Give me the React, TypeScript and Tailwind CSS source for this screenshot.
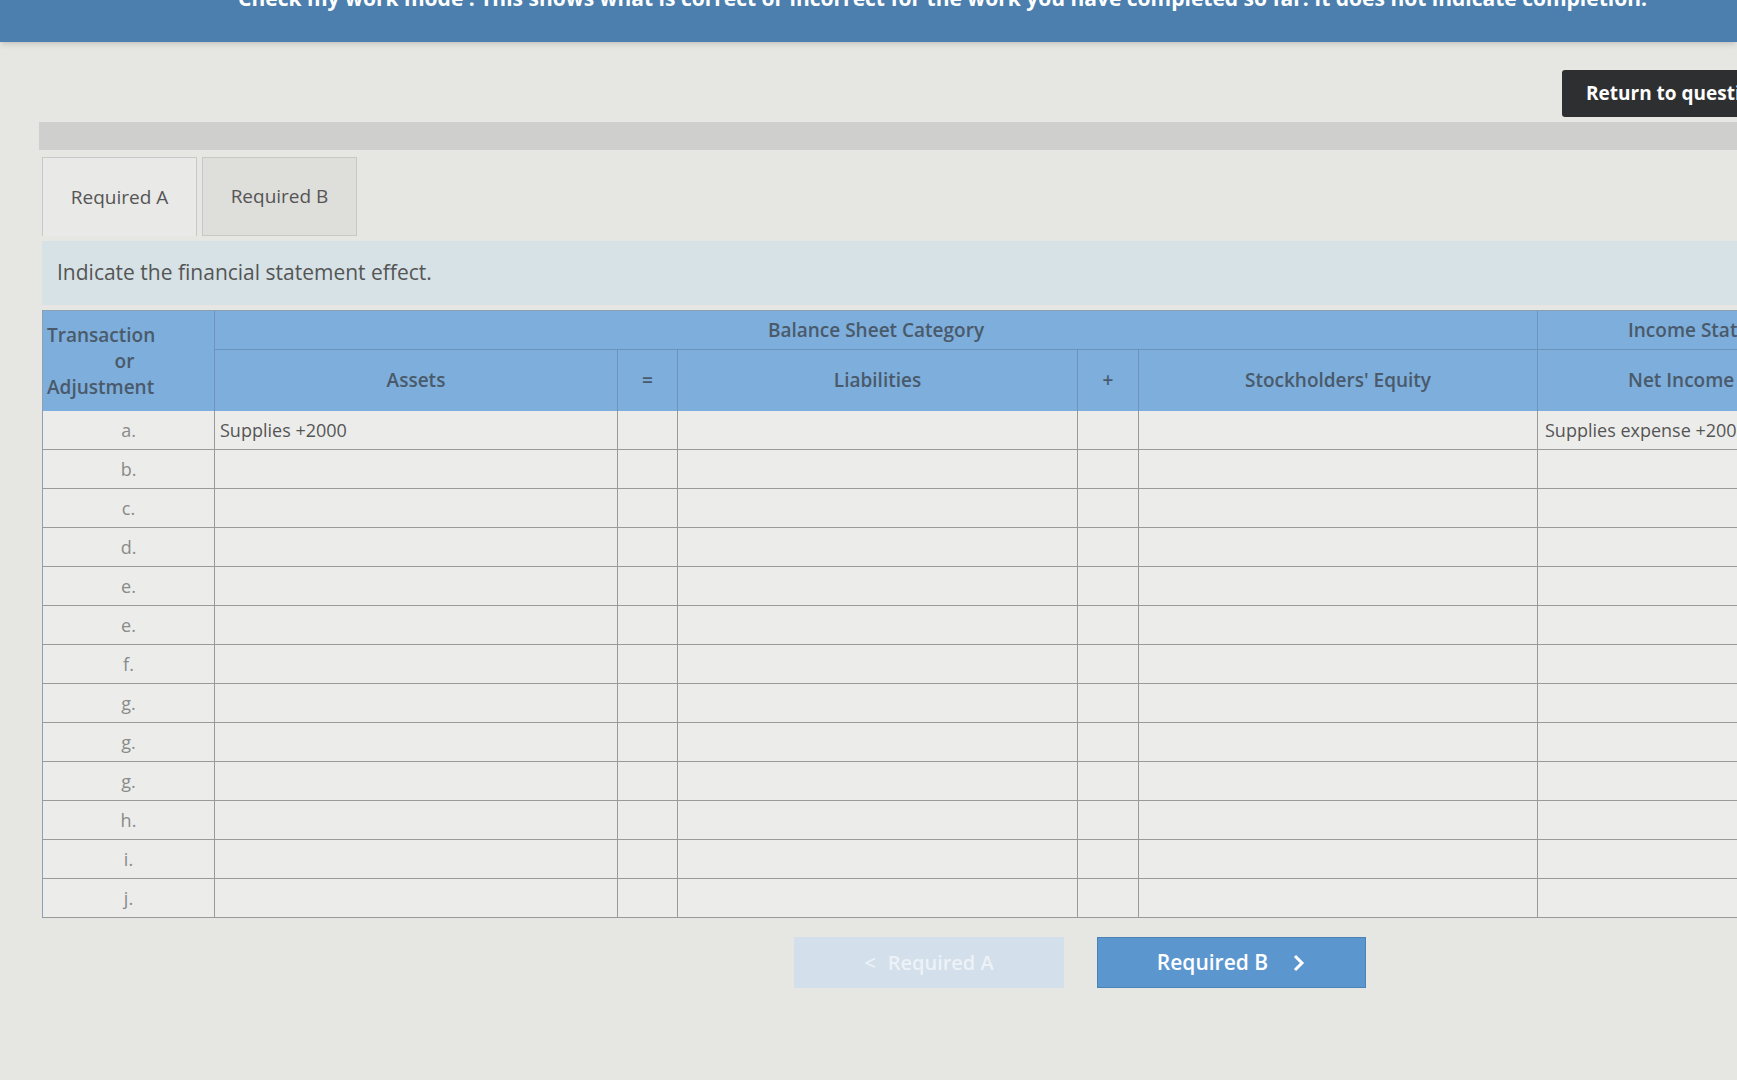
import * as React from 'react';

const rows = ['a.', 'b.', 'c.', 'd.', 'e.', 'e.', 'f.', 'g.', 'g.', 'g.', 'h.', 'i.', 'j.'];

const cell = 'border-r border-b border-[#9a9a9a] h-[39px]';

export default function App() {
  return (
    <div
      className="w-[1737px] h-[1080px] overflow-hidden bg-[#e6e6e3] text-[#555]"
      style={{ fontFamily: '"Open Sans", "Liberation Sans", sans-serif' }}
    >
      <div className="h-[42px] bg-[#4c7fae] overflow-hidden flex items-start justify-end pr-[90px] shadow-md">
        <p className="text-white font-bold text-[21px] leading-none -mt-[12px] whitespace-nowrap">
          Check my work mode : This shows what is correct or incorrect for the work you have completed so far. It does not indicate completion.
        </p>
      </div>

      <div className="flex justify-end pt-[28px] h-[80px]">
        <div className="w-[175px] h-[47px] bg-[#2e2f31] rounded-l-[3px] flex items-center pl-[24px] text-white font-bold text-[19px] whitespace-nowrap overflow-hidden">
          Return to question
        </div>
      </div>

      <div className="ml-[39px] h-[28px] bg-[#cfcfcd]" />

      <div className="ml-[42px] mt-[7px] flex gap-[5px]">
        <div className="w-[155px] h-[79px] border border-[#c8c8c8] border-b-0 bg-[#e9e9e7] flex items-center justify-center text-[19px]">
          Required A
        </div>
        <div className="w-[155px] h-[79px] border border-[#c8c8c8] bg-[#dededb] flex items-center justify-center text-[19px]">
          Required B
        </div>
      </div>

      <div className="ml-[42px] mt-[5px] h-[64px] bg-[#d6e2e6] flex items-center pl-[15px] text-[21px] text-[#555]">
        Indicate the financial statement effect.
      </div>

      <div className="ml-[42px] mt-[5px] w-[1800px] border-l border-t border-[#8aa0b5] text-[19px]">
        <div className="flex bg-[#7daedc] text-[#4a5a6a] font-semibold">
          <div className="w-[172px] h-[100px] border-r border-[#6b93bb] flex flex-col justify-center leading-[26px] px-[4px] items-start">
            <span>Transaction</span>
            <span className="self-center -ml-[8px]">or</span>
            <span>Adjustment</span>
          </div>
          <div className="flex flex-col">
            <div className="h-[39px] w-[1323px] border-r border-b border-[#6b93bb] flex items-center justify-center">
              Balance Sheet Category
            </div>
            <div className="flex h-[61px]">
              <div className="w-[403px] border-r border-[#6b93bb] flex items-center justify-center">Assets</div>
              <div className="w-[60px] border-r border-[#6b93bb] flex items-center justify-center">=</div>
              <div className="w-[400px] border-r border-[#6b93bb] flex items-center justify-center">Liabilities</div>
              <div className="w-[61px] border-r border-[#6b93bb] flex items-center justify-center">+</div>
              <div className="w-[399px] border-r border-[#6b93bb] flex items-center justify-center">Stockholders' Equity</div>
            </div>
          </div>
          <div className="flex flex-col w-[300px]">
            <div className="h-[39px] border-b border-[#6b93bb] flex items-center pl-[90px]">Income Statement</div>
            <div className="h-[61px] flex items-center pl-[90px]">Net Income</div>
          </div>
        </div>
        {rows.map((r, i) => (
          <div key={i} className="flex bg-[#ecedeb] text-[18px]">
            <div className={`${cell} w-[172px] flex items-center justify-center text-[#8a8a8a]`}>{r}</div>
            <div className={`${cell} w-[403px] flex items-center pl-[5px] text-[#555]`}>{i === 0 ? 'Supplies +2000' : ''}</div>
            <div className={`${cell} w-[60px]`} />
            <div className={`${cell} w-[400px]`} />
            <div className={`${cell} w-[61px]`} />
            <div className={`${cell} w-[399px]`} />
            <div className={`${cell} w-[300px] flex items-center pl-[7px] text-[#555] whitespace-nowrap`}>
              {i === 0 ? 'Supplies expense +2000' : ''}
            </div>
          </div>
        ))}
      </div>

      <div className="flex gap-[33px] mt-[19px] ml-[794px]">
        <div className="w-[270px] h-[51px] bg-[#d3dfea] flex items-center justify-center gap-[12px] text-[#edf2f7] font-semibold text-[20px]">
          <span>&lt;</span> Required A
        </div>
        <div className="w-[269px] h-[51px] bg-[#5b96cf] border border-[#4b82b8] flex items-center justify-center gap-[24px] text-white font-semibold text-[21px]">
          Required B
          <svg width="14" height="20" viewBox="0 0 14 20" fill="none" stroke="white" strokeWidth="3">
            <path d="M3 3l7 7-7 7" />
          </svg>
        </div>
      </div>
    </div>
  );
}
